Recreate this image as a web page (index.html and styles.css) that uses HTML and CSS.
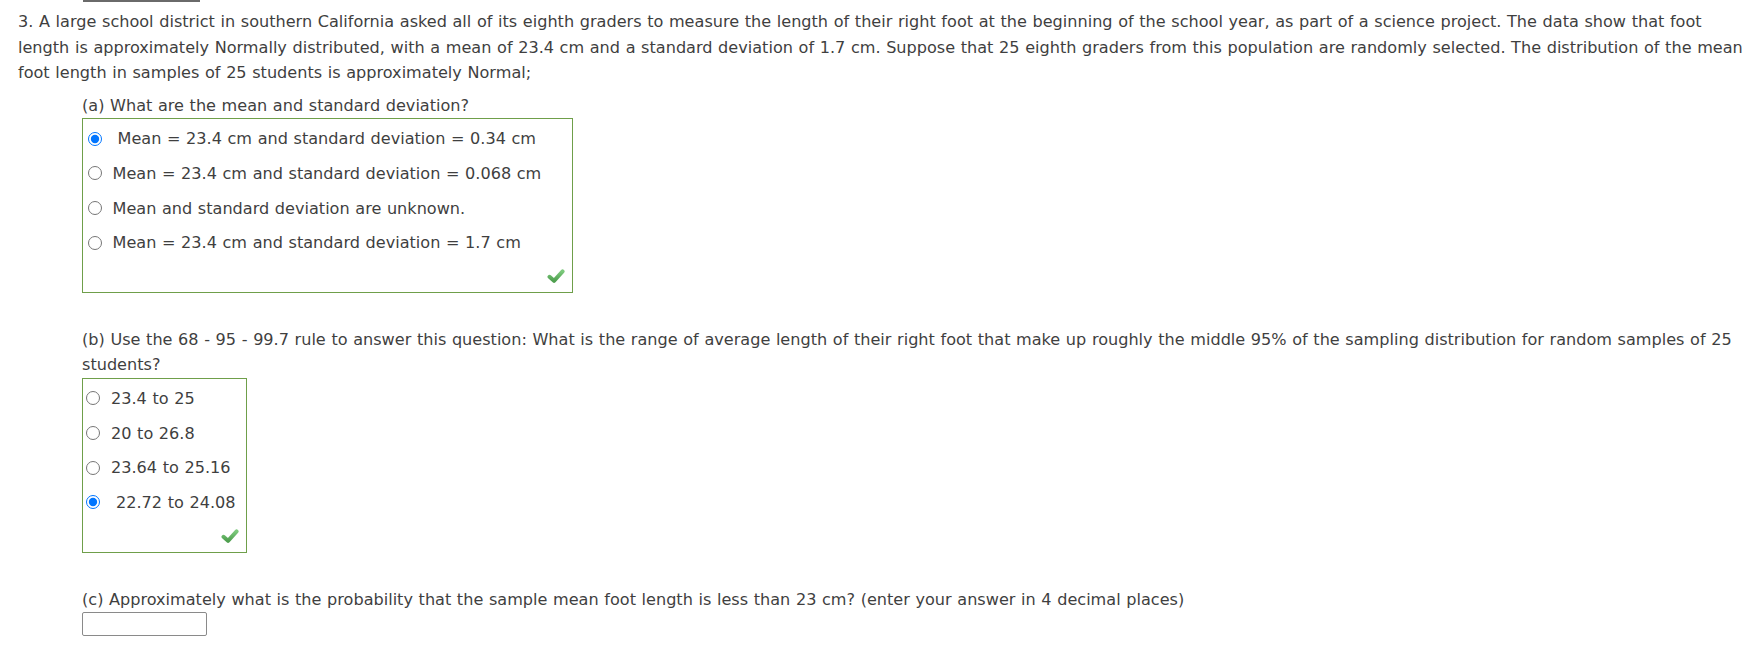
FILE: index.html
```html
<!DOCTYPE html>
<html>
<head>
<meta charset="utf-8">
<link rel="stylesheet" href="styles.css">
</head>
<body>
<div class="rule"></div>
<div class="question">
  <p class="stem">3. A large school district in southern California asked all of its eighth graders to measure the length of their right foot at the beginning of the school year, as part of a science project. The data show that foot length is approximately Normally distributed, with a mean of 23.4 cm and a standard deviation of 1.7 cm. Suppose that 25 eighth graders from this population are randomly selected. The distribution of the mean foot length in samples of 25 students is approximately Normal;</p>

  <div class="part part-a">
    <div class="prompt">(a) What are the mean and standard deviation?</div>
    <div class="choices choices-a">
      <label class="opt sel"><input type="radio" name="a" checked><span>Mean = 23.4 cm and standard deviation = 0.34 cm</span></label>
      <label class="opt"><input type="radio" name="a"><span>Mean = 23.4 cm and standard deviation = 0.068 cm</span></label>
      <label class="opt"><input type="radio" name="a"><span>Mean and standard deviation are unknown.</span></label>
      <label class="opt"><input type="radio" name="a"><span>Mean = 23.4 cm and standard deviation = 1.7 cm</span></label>
      <div class="mark"><svg width="18" height="14" viewBox="0 0 18 14"><defs><linearGradient id="g1" x1="0" y1="0" x2="0" y2="1"><stop offset="0" stop-color="#7cc97c"/><stop offset="1" stop-color="#4f9f4f"/></linearGradient></defs><path d="M2.5 7.8 L7 11.8 L15.6 2.4" fill="none" stroke="url(#g1)" stroke-width="4" stroke-linecap="round" stroke-linejoin="round"/></svg></div>
    </div>
  </div>

  <div class="part part-b">
    <div class="prompt">(b) Use the 68 - 95 - 99.7 rule to answer this question: What is the range of average length of their right foot that make up roughly the middle 95% of the sampling distribution for random samples of 25 students?</div>
    <div class="choices choices-b">
      <label class="opt"><input type="radio" name="b"><span>23.4 to 25</span></label>
      <label class="opt"><input type="radio" name="b"><span>20 to 26.8</span></label>
      <label class="opt"><input type="radio" name="b"><span>23.64 to 25.16</span></label>
      <label class="opt sel"><input type="radio" name="b" checked><span>22.72 to 24.08</span></label>
      <div class="mark"><svg width="18" height="14" viewBox="0 0 18 14"><defs><linearGradient id="g2" x1="0" y1="0" x2="0" y2="1"><stop offset="0" stop-color="#7cc97c"/><stop offset="1" stop-color="#4f9f4f"/></linearGradient></defs><path d="M2.5 7.8 L7 11.8 L15.6 2.4" fill="none" stroke="url(#g2)" stroke-width="4" stroke-linecap="round" stroke-linejoin="round"/></svg></div>
    </div>
  </div>

  <div class="part part-c">
    <div class="prompt">(c) Approximately what is the probability that the sample mean foot length is less than 23 cm? (enter your answer in 4 decimal places)</div>
    <input class="answer" type="text">
  </div>
</div>
</body>
</html>
```

FILE: styles.css
```css
html, body {
  margin: 0;
  padding: 0;
  background: #ffffff;
}

body {
  font-family: "DejaVu Sans", Verdana, sans-serif;
  font-size: 16.1px;
  color: #3f3f3f;
  word-spacing: 0.5px;
}

.rule {
  height: 2px;
  width: 117px;
  margin-left: 83px;
  background: #6a6a6a;
}

.question {
  padding-left: 18px;
}

.stem {
  margin: 7px 0 0;
  line-height: 25.5px;
}

.part {
  margin-left: 64px;
}

.part-a {
  margin-top: 7px;
}

.part-b {
  margin-top: 33.5px;
}

.part-c {
  margin-top: 34px;
}

.prompt {
  line-height: 25.5px;
}

.choices {
  box-sizing: border-box;
  border: 1px solid #6f9f4a;
  padding: 2.5px 7px 9px 4.5px;
}

.choices-a {
  width: 491px;
}

.choices-b {
  width: 165px;
  padding-left: 3px;
}

.opt {
  display: flex;
  align-items: center;
  height: 34.67px;
  white-space: nowrap;
}

.opt input {
  width: 14px;
  height: 14px;
  margin: 0 11px 0 0;
  flex: none;
}

.opt.sel span {
  padding-left: 5px;
}

.mark {
  display: flex;
  justify-content: flex-end;
  margin-top: 9px;
  height: 14px;
}

.mark svg {
  display: block;
}

.answer {
  display: block;
  box-sizing: border-box;
  margin: 0;
  width: 125px;
  height: 24px;
  border: 1px solid #8a8a8a;
  border-radius: 2px;
  padding: 0 4px;
  font: inherit;
}
```
